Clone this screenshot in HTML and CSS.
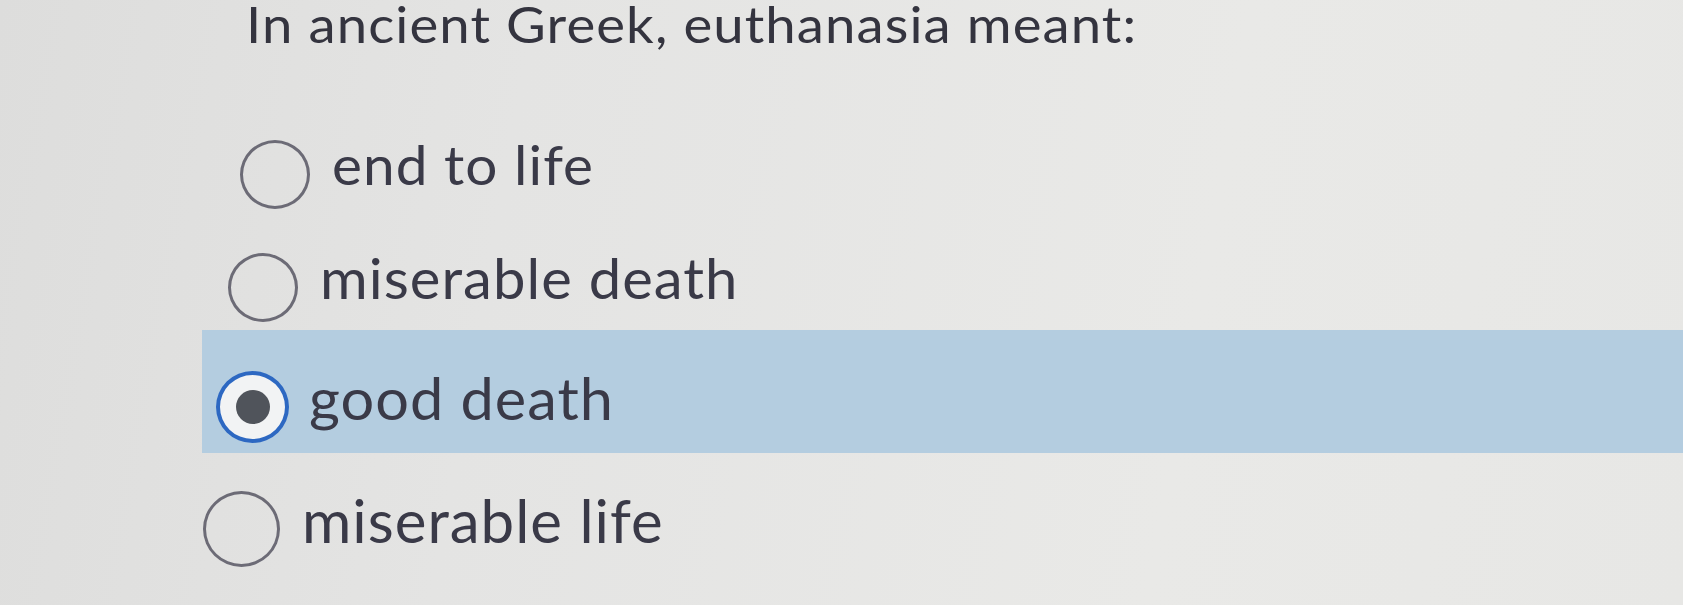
FILE: index.html
```html
<!DOCTYPE html>
<html lang="en">
<head>
<meta charset="utf-8">
<title>Quiz question</title>
<link rel="stylesheet" href="styles.css">
</head>
<body>
<main class="quiz">
  <h1 class="question"><span class="question-text">In ancient Greek, euthanasia meant:</span></h1>
  <div class="options">
    <label class="option option-1">
      <span class="radio"></span>
      <span class="label-text">end to life</span>
    </label>
    <label class="option option-2">
      <span class="radio"></span>
      <span class="label-text">miserable death</span>
    </label>
    <label class="option option-3 selected">
      <span class="radio checked"><span class="dot"></span></span>
      <span class="label-text">good death</span>
    </label>
    <label class="option option-4">
      <span class="radio"></span>
      <span class="label-text">miserable life</span>
    </label>
  </div>
</main>
</body>
</html>
```

FILE: styles.css
```css
* { box-sizing: border-box; }

html, body {
  margin: 0;
  padding: 0;
  width: 1683px;
  height: 605px;
  overflow: hidden;
}

body {
  background: linear-gradient(100deg, #dddddc 0%, #e4e4e3 30%, #e9e9e7 70%, #e7e7e5 100%);
  font-family: Lato, "Open Sans", "Liberation Sans", sans-serif;
  color: #3a3a48;
}

.quiz {
  display: flex;
  flex-direction: column;
}

.question {
  margin: 0;
  padding: 6px 0 0 246px;
  height: 120px;
  font-size: 50px;
  font-weight: 400;
  line-height: 36px;
  color: #34343f;
  white-space: nowrap;
}

.question-text {
  display: inline-block;
  letter-spacing: 1px;
  transform: scaleX(1.09);
  transform-origin: left center;
}

.options {
  display: flex;
  flex-direction: column;
}

.option {
  display: flex;
  align-items: center;
  gap: 22px;
}

.option-1 {
  height: 108px;
  padding-left: 240px;
}

.option-2 {
  height: 102px;
  padding-top: 16px;
  padding-left: 228px;
}

.option-3 {
  height: 123px;
  padding-top: 30px;
  margin-left: 202px;
  padding-left: 14px;
  gap: 20px;
  background: #b4cde0;
}

.option-4 {
  height: 152px;
  padding-left: 203px;
}

.radio {
  flex: none;
  width: 70px;
  height: 69px;
  border: 3px solid #6c6b76;
  border-radius: 50%;
  display: flex;
  align-items: center;
  justify-content: center;
}

.option-4 .radio {
  width: 77px;
  height: 76px;
}

.radio.checked {
  width: 73px;
  height: 72px;
  border: 4.5px solid #2d68c2;
  background: #f2f3f4;
}

.dot {
  width: 34px;
  height: 34px;
  border-radius: 50%;
  background: #50545b;
}

.label-text {
  display: inline-block;
  padding-bottom: 18px;
  line-height: 1.2;
  letter-spacing: 1px;
  white-space: nowrap;
  transform-origin: left center;
}

.option-1 .label-text { font-size: 54px; transform: scaleX(1.05); }
.option-2 .label-text { font-size: 56px; transform: scaleX(1.035); }
.option-3 .label-text { font-size: 58px; transform: scaleX(1.025); }
.option-4 .label-text { font-size: 60px; }
```
